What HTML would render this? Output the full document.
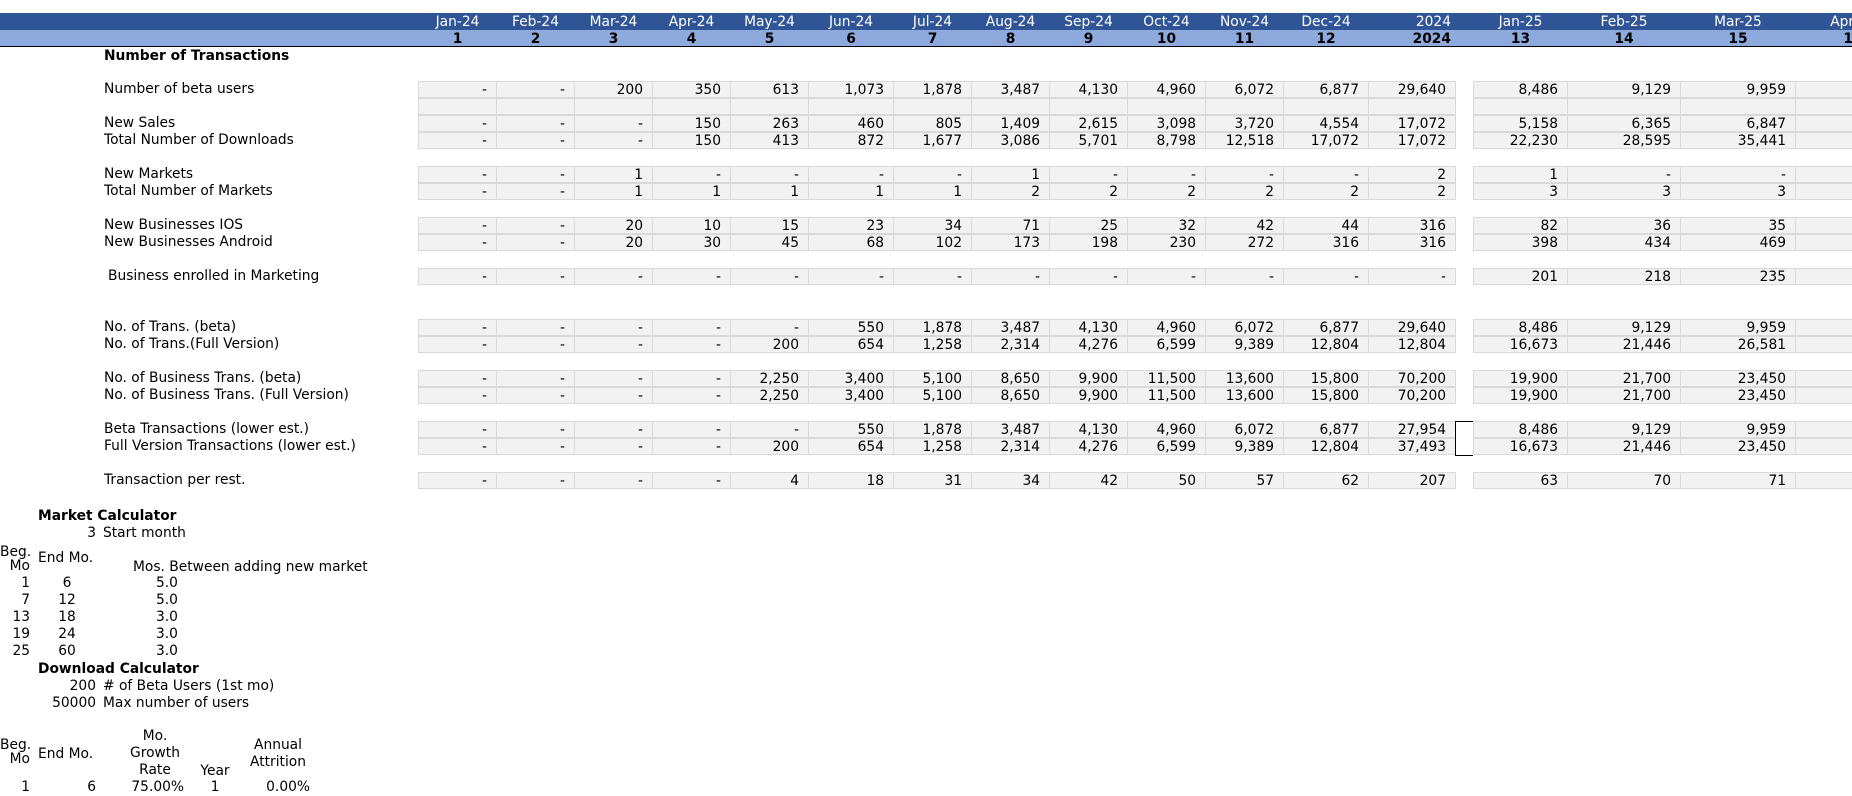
<!DOCTYPE html>
<html><head><meta charset="utf-8"><style>
*{margin:0;padding:0;box-sizing:border-box}
body{width:1852px;height:792px;overflow:hidden;background:#fff;font-family:"DejaVu Sans","Liberation Sans",sans-serif;font-size:13.8px;color:#000;position:relative}
.hd{position:absolute;left:0;width:1852px;height:17px;background:#2F5597}
.hl{position:absolute;left:0;top:30px;width:1852px;height:17px;background:#8EA9DB;border-bottom:1.5px solid #000}
.r{position:absolute;left:418px;height:17px;display:flex;white-space:nowrap}
.r i{font-style:normal;display:block;height:17px;line-height:16px;text-align:right;padding-right:9px;background:#f2f2f2;border:1px solid #d9d9d9;margin-right:-1px;margin-bottom:-1px}
.r.h i{background:none;border-color:transparent;text-align:center;padding:0;line-height:16px}
.r.h1 i{color:#fff}
.r.h2 i{font-weight:bold}
.r i:nth-child(-n+5),.r i:nth-child(n+7):nth-child(-n+11){width:79px}
.r i:nth-child(6),.r i:nth-child(12){width:86px}
.r i:nth-child(13){width:88px}
.r i:nth-child(14){width:95px;margin-left:18px}
.r i:nth-child(15){width:114px}
.r i:nth-child(16),.r i:nth-child(17){width:116px}
.r.h i:nth-child(13){text-align:right;padding-right:4px}
.l{position:absolute;left:104px;line-height:17px;white-space:nowrap}
.t{position:absolute;line-height:17px;white-space:nowrap}
</style></head><body>
<div class="hd" style="top:13px"></div>
<div class="hl"></div>
<div class="r h h1" style="top:13px"><i>Jan-24</i><i>Feb-24</i><i>Mar-24</i><i>Apr-24</i><i>May-24</i><i>Jun-24</i><i>Jul-24</i><i>Aug-24</i><i>Sep-24</i><i>Oct-24</i><i>Nov-24</i><i>Dec-24</i><i>2024</i><i>Jan-25</i><i>Feb-25</i><i>Mar-25</i><i>Apr-25</i></div>
<div class="r h h2" style="top:30px"><i>1</i><i>2</i><i>3</i><i>4</i><i>5</i><i>6</i><i>7</i><i>8</i><i>9</i><i>10</i><i>11</i><i>12</i><i>2024</i><i>13</i><i>14</i><i>15</i><i>16</i></div>

<div class="l" style="top:48px;font-weight:bold">Number of Transactions</div>

<div class="l" style="top:81px">Number of beta users</div>
<div class="r" style="top:81px"><i>-</i><i>-</i><i>200</i><i>350</i><i>613</i><i>1,073</i><i>1,878</i><i>3,487</i><i>4,130</i><i>4,960</i><i>6,072</i><i>6,877</i><i>29,640</i><i>8,486</i><i>9,129</i><i>9,959</i><i></i></div>
<div class="r" style="top:98px"><i></i><i></i><i></i><i></i><i></i><i></i><i></i><i></i><i></i><i></i><i></i><i></i><i></i><i></i><i></i><i></i><i></i></div>
<div class="l" style="top:115px">New Sales</div>
<div class="r" style="top:115px"><i>-</i><i>-</i><i>-</i><i>150</i><i>263</i><i>460</i><i>805</i><i>1,409</i><i>2,615</i><i>3,098</i><i>3,720</i><i>4,554</i><i>17,072</i><i>5,158</i><i>6,365</i><i>6,847</i><i></i></div>
<div class="l" style="top:132px">Total Number of Downloads</div>
<div class="r" style="top:132px"><i>-</i><i>-</i><i>-</i><i>150</i><i>413</i><i>872</i><i>1,677</i><i>3,086</i><i>5,701</i><i>8,798</i><i>12,518</i><i>17,072</i><i>17,072</i><i>22,230</i><i>28,595</i><i>35,441</i><i></i></div>

<div class="l" style="top:166px">New Markets</div>
<div class="r" style="top:166px"><i>-</i><i>-</i><i>1</i><i>-</i><i>-</i><i>-</i><i>-</i><i>1</i><i>-</i><i>-</i><i>-</i><i>-</i><i>2</i><i>1</i><i>-</i><i>-</i><i></i></div>
<div class="l" style="top:183px">Total Number of Markets</div>
<div class="r" style="top:183px"><i>-</i><i>-</i><i>1</i><i>1</i><i>1</i><i>1</i><i>1</i><i>2</i><i>2</i><i>2</i><i>2</i><i>2</i><i>2</i><i>3</i><i>3</i><i>3</i><i></i></div>

<div class="l" style="top:217px">New Businesses IOS</div>
<div class="r" style="top:217px"><i>-</i><i>-</i><i>20</i><i>10</i><i>15</i><i>23</i><i>34</i><i>71</i><i>25</i><i>32</i><i>42</i><i>44</i><i>316</i><i>82</i><i>36</i><i>35</i><i></i></div>
<div class="l" style="top:234px">New Businesses Android</div>
<div class="r" style="top:234px"><i>-</i><i>-</i><i>20</i><i>30</i><i>45</i><i>68</i><i>102</i><i>173</i><i>198</i><i>230</i><i>272</i><i>316</i><i>316</i><i>398</i><i>434</i><i>469</i><i></i></div>

<div class="l" style="top:268px;left:108px">Business enrolled in Marketing</div>
<div class="r" style="top:268px"><i>-</i><i>-</i><i>-</i><i>-</i><i>-</i><i>-</i><i>-</i><i>-</i><i>-</i><i>-</i><i>-</i><i>-</i><i>-</i><i>201</i><i>218</i><i>235</i><i></i></div>

<div class="l" style="top:319px">No. of Trans. (beta)</div>
<div class="r" style="top:319px"><i>-</i><i>-</i><i>-</i><i>-</i><i>-</i><i>550</i><i>1,878</i><i>3,487</i><i>4,130</i><i>4,960</i><i>6,072</i><i>6,877</i><i>29,640</i><i>8,486</i><i>9,129</i><i>9,959</i><i></i></div>
<div class="l" style="top:336px">No. of Trans.(Full Version)</div>
<div class="r" style="top:336px"><i>-</i><i>-</i><i>-</i><i>-</i><i>200</i><i>654</i><i>1,258</i><i>2,314</i><i>4,276</i><i>6,599</i><i>9,389</i><i>12,804</i><i>12,804</i><i>16,673</i><i>21,446</i><i>26,581</i><i></i></div>

<div class="l" style="top:370px">No. of Business Trans. (beta)</div>
<div class="r" style="top:370px"><i>-</i><i>-</i><i>-</i><i>-</i><i>2,250</i><i>3,400</i><i>5,100</i><i>8,650</i><i>9,900</i><i>11,500</i><i>13,600</i><i>15,800</i><i>70,200</i><i>19,900</i><i>21,700</i><i>23,450</i><i></i></div>
<div class="l" style="top:387px">No. of Business Trans. (Full Version)</div>
<div class="r" style="top:387px"><i>-</i><i>-</i><i>-</i><i>-</i><i>2,250</i><i>3,400</i><i>5,100</i><i>8,650</i><i>9,900</i><i>11,500</i><i>13,600</i><i>15,800</i><i>70,200</i><i>19,900</i><i>21,700</i><i>23,450</i><i></i></div>

<div class="l" style="top:421px">Beta Transactions (lower est.)</div>
<div class="r" style="top:421px"><i>-</i><i>-</i><i>-</i><i>-</i><i>-</i><i>550</i><i>1,878</i><i>3,487</i><i>4,130</i><i>4,960</i><i>6,072</i><i>6,877</i><i>27,954</i><i>8,486</i><i>9,129</i><i>9,959</i><i></i></div>
<div class="l" style="top:438px">Full Version Transactions (lower est.)</div>
<div class="r" style="top:438px"><i>-</i><i>-</i><i>-</i><i>-</i><i>200</i><i>654</i><i>1,258</i><i>2,314</i><i>4,276</i><i>6,599</i><i>9,389</i><i>12,804</i><i>37,493</i><i>16,673</i><i>21,446</i><i>23,450</i><i></i></div>
<div style="position:absolute;left:1455px;top:421px;width:18px;height:35px;border-top:1.5px solid #000;border-bottom:1.5px solid #000;border-left:1.5px solid #000"></div>

<div class="l" style="top:472px">Transaction per rest.</div>
<div class="r" style="top:472px"><i>-</i><i>-</i><i>-</i><i>-</i><i>4</i><i>18</i><i>31</i><i>34</i><i>42</i><i>50</i><i>57</i><i>62</i><i>207</i><i>63</i><i>70</i><i>71</i><i></i></div>

<div class="t" style="left:38px;top:508px;font-weight:bold">Market Calculator</div>
<div class="t" style="left:60px;width:36px;text-align:right;top:525px">3</div>
<div class="t" style="left:103px;top:525px">Start month</div>
<div class="t" style="left:0;width:30px;text-align:right;top:545px;line-height:14px">Beg.<br>Mo</div>
<div class="t" style="left:38px;top:550px">End Mo.</div>
<div class="t" style="left:133px;top:559px">Mos. Between adding new market</div>
<div class="t" style="left:0;width:30px;text-align:right;top:575px;line-height:17px">1<br>7<br>13<br>19<br>25</div>
<div class="t" style="left:47px;width:40px;text-align:center;top:575px;line-height:17px">6<br>12<br>18<br>24<br>60</div>
<div class="t" style="left:147px;width:40px;text-align:center;top:575px;line-height:17px">5.0<br>5.0<br>3.0<br>3.0<br>3.0</div>
<div class="t" style="left:38px;top:661px;font-weight:bold">Download Calculator</div>
<div class="t" style="left:30px;width:66px;text-align:right;top:678px;line-height:17px">200<br>50000</div>
<div class="t" style="left:103px;top:678px;line-height:17px"># of Beta Users (1st mo)<br>Max number of users</div>
<div class="t" style="left:0;width:30px;text-align:right;top:738px;line-height:14px">Beg.<br>Mo</div>
<div class="t" style="left:38px;top:746px">End Mo.</div>
<div class="t" style="left:120px;width:70px;text-align:center;top:728px;line-height:17px">Mo.<br>Growth<br>Rate</div>
<div class="t" style="left:200px;width:30px;text-align:center;top:763px">Year</div>
<div class="t" style="left:240px;width:76px;text-align:center;top:737px;line-height:17px">Annual<br>Attrition</div>
<div class="t" style="left:0;width:30px;text-align:right;top:779px">1</div>
<div class="t" style="left:60px;width:36px;text-align:right;top:779px">6</div>
<div class="t" style="left:120px;width:64px;text-align:right;top:779px">75.00%</div>
<div class="t" style="left:200px;width:30px;text-align:center;top:779px">1</div>
<div class="t" style="left:250px;width:60px;text-align:right;top:779px">0.00%</div>
</body></html>
